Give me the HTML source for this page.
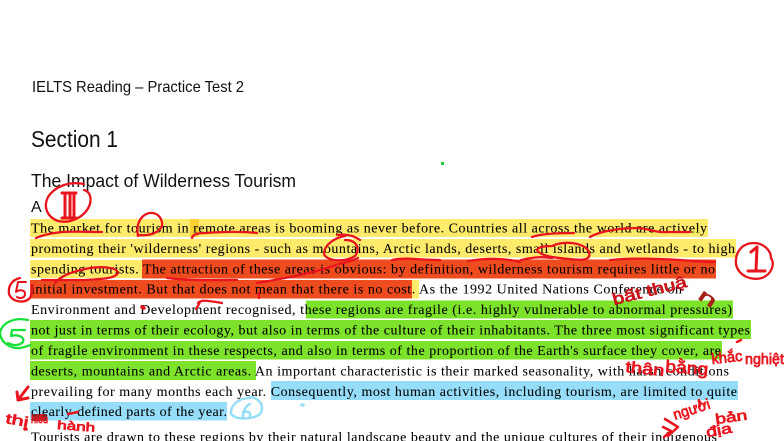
<!DOCTYPE html>
<html><head><meta charset="utf-8">
<style>
html,body{margin:0;padding:0;background:#fff;width:784px;height:441px;overflow:hidden}
svg{display:block;position:absolute;left:0;top:0;filter:blur(.3px)}
.s{font-family:"Liberation Serif",serif;font-size:14px;fill:#000;stroke:#000;stroke-width:.05}
.h{font-family:"Liberation Sans",sans-serif;fill:#111}
.r path{fill:none;stroke:#e8141e;stroke-width:2.3;stroke-linecap:round;stroke-linejoin:round}
.w{font-family:"Liberation Sans",sans-serif;fill:#e8141e;stroke:#e8141e;stroke-width:.7}
</style></head><body>
<svg width="784" height="441" viewBox="0 0 784 441">
<g>
<rect x="30" y="219" width="678" height="18" fill="#ffeb6b"/>
<rect x="190" y="219" width="9" height="18" fill="#fbd233"/>
<rect x="30" y="239" width="706" height="18.500" fill="#ffeb6b"/>
<rect x="30" y="260" width="112" height="18" fill="#ffeb6b"/>
<rect x="142" y="259.500" width="574" height="19" fill="#ee4b1f"/>
<rect x="30" y="280" width="382" height="18.500" fill="#ee4b1f"/>
<rect x="412" y="280" width="7" height="18.500" fill="#ffeb6b"/>
<rect x="306" y="300.500" width="427" height="18" fill="#7ce22b"/>
<rect x="30" y="320" width="721" height="19" fill="#7ce22b"/>
<rect x="30" y="341" width="692" height="18.500" fill="#7ce22b"/>
<rect x="30" y="361" width="226" height="19" fill="#7ce22b"/>
<rect x="271" y="381" width="467" height="19" fill="#95ddf8"/>
<rect x="30" y="402" width="197" height="18.500" fill="#95ddf8"/>
</g>
<text class="h" x="32" y="92" font-size="16" textLength="212" lengthAdjust="spacingAndGlyphs">IELTS Reading – Practice Test 2</text>
<text class="h" x="31" y="147" font-size="23" textLength="87" lengthAdjust="spacingAndGlyphs">Section 1</text>
<text class="h" x="31" y="187" font-size="18" textLength="265" lengthAdjust="spacingAndGlyphs">The Impact of Wilderness Tourism</text>
<text class="h" x="31" y="212" font-size="16">A</text>
<g class="s">
<text x="31" y="232.500" textLength="676">The market for tourism in remote areas is booming as never before. Countries all across the world are actively</text>
<text x="31" y="253" textLength="704">promoting their 'wilderness' regions - such as mountains, Arctic lands, deserts, small islands and wetlands - to high</text>
<text x="31" y="273.500" textLength="684">spending tourists. The attraction of these areas is obvious: by definition, wilderness tourism requires little or no</text>
<text x="31" y="293.500" textLength="651">initial investment. But that does not mean that there is no cost. As the 1992 United Nations Conference on</text>
<text x="31" y="314" textLength="701">Environment and Development recognised, these regions are fragile (i.e. highly vulnerable to abnormal pressures)</text>
<text x="31" y="334.500" textLength="719">not just in terms of their ecology, but also in terms of the culture of their inhabitants. The three most significant types</text>
<text x="31" y="355" textLength="690">of fragile environment in these respects, and also in terms of the proportion of the Earth's surface they cover, are</text>
<text x="31" y="375.500" textLength="698">deserts, mountains and Arctic areas. An important characteristic is their marked seasonality, with harsh conditions</text>
<text x="31" y="396" textLength="706">prevailing for many months each year. Consequently, most human activities, including tourism, are limited to quite</text>
<text x="31" y="416" textLength="196">clearly-defined parts of the year.</text>
<text x="31" y="441.500" textLength="686">Tourists are drawn to these regions by their natural landscape beauty and the unique cultures of their indigenous</text>
</g>
<g class="r">
<path d="M84 184C70 181 55 186 48 197C43 207 47 217 58 221C72 224 86 216 90 204C92 195 88 191 84 190"/>
<path style="stroke-width:3" d="M65 194V218M70 193V218M74 194V217M62 193H76M62 218H76"/>
<path d="M36 238C45 234 54 233 62 232C78 231 90 232 102 232"/>
<path d="M138 236C136 226 139 216 149 213C158 212 163 219 162 226C158 234 148 236 139 235"/>
<path d="M192 238C193 234 198 233 205 233C222 232 240 231 257 233"/>
<path d="M345 236C334 238 324 245 324 254C327 262 346 262 355 256C360 250 358 240 345 240M337 235C345 234 353 235 360 240"/>
<path d="M55 283C60 276 74 271 90 268C104 266 118 268 118 273C115 279 100 279 85 280C70 280 55 280 42 280"/>
<path d="M167 278C190 281 215 280 237 280"/>
<path d="M257 283C280 279 310 274 333 266C345 262 352 261 358 258"/>
<path d="M392 260C405 257 420 260 440 260M468 261C485 258 505 258 520 262M521 260C530 258 540 256 552 258"/>
<path d="M532 237C540 234 555 233 574 233"/>
<path d="M590 237C600 231 620 228 639 228C650 229 656 233 668 232C677 232 686 232 690 232"/>
<path d="M552 246C565 240 585 243 589 252C591 259 586 261 570 259C555 258 540 256 537 250C538 247 545 246 552 246"/>
<path d="M610 260C630 258 650 258 680 260C695 261 708 262 715 262"/>
<path d="M754 243C742 243 735 252 736 264C738 275 750 281 762 278C772 274 775 264 771 258C771 250 763 243 754 243Z"/>
<path style="stroke-width:3" d="M751 252L757 247L756 270M748 271H765"/>
<path d="M20 278C11 280 8 287 9 294C12 302 24 304 30 298C33 292 32 287 32 285"/>
<path style="stroke-width:2" d="M18 282L16 292C20 289 25 290 25 294C25 298 20 299 17 297M18 282H26"/>
<path d="M198 303C200 300 205 300 222 303M196 309C198 306 199 304 200 302"/>
<path d="M259 293V298"/>
<path style="stroke-width:3.500" d="M142 307L144 308"/>
<path d="M28 320C15 317 3 322 0 332C0 342 10 349 20 348C25 347 28 346 30 345" style="stroke:#18e03a"/>
<path d="M25 330H12L11 336C18 334 25 337 23 342C19 346 14 346 8 343" style="stroke:#18e03a"/>
<path d="M250 398C238 398 230 406 231 414C236 420 252 420 260 414C265 407 260 398 250 397" style="stroke:#95ddf8;stroke-width:2.500"/>
<path d="M250 404C245 406 243 412 243 418M243 412C248 411 251 412 250 416" style="stroke:#95ddf8;stroke-width:2.500"/>
<path d="M302 405L303 405" style="stroke:#95ddf8;stroke-width:3.500"/>
<path style="stroke-width:3" d="M28 387L18 400M17 392L18 400L28 398"/>
<path style="stroke-width:2.500" d="M665 419L678 427L668 436M663 427L671 431L664 437"/>
<path style="stroke-width:2.500" d="M68 414L78 412"/>
<path style="stroke-width:3.500" d="M25 429L26 429"/>
<path style="stroke-width:2.500" d="M737 342L741 340M699 400L700 406"/>
</g>
<rect x="32" y="414" width="15" height="7" fill="#8b1a1a" opacity=".9"/>
<rect x="441" y="162" width="3" height="3" fill="#22cc33"/>
<text class="w" x="5" y="423" font-size="14" transform="rotate(10 5 423)" textLength="23" lengthAdjust="spacingAndGlyphs">thị</text>
<text class="w" x="31" y="423" font-size="11" textLength="17" lengthAdjust="spacingAndGlyphs">hiếu</text>
<text class="w" x="57" y="429" font-size="12" transform="rotate(4 57 429)" textLength="38" lengthAdjust="spacingAndGlyphs">hành</text>
<text class="w" x="614" y="305" font-size="16" transform="rotate(-14 614 305)" textLength="76" lengthAdjust="spacingAndGlyphs" style="fill:#c8141a;stroke:#c8141a">bất thuậ</text>
<text class="w" x="697" y="298" font-size="18" transform="rotate(35 697 298)" textLength="18" lengthAdjust="spacingAndGlyphs" style="fill:#a8201a;stroke:#a8201a">n</text>
<text class="w" x="625" y="372" font-size="16" transform="rotate(6 625 372)" textLength="39" lengthAdjust="spacingAndGlyphs">thân</text>
<text class="w" x="665" y="372" font-size="17" transform="rotate(4 665 372)" textLength="43" lengthAdjust="spacingAndGlyphs">bằng</text>
<text class="w" x="712" y="364" font-size="15" transform="rotate(-6 712 364)" textLength="31" lengthAdjust="spacingAndGlyphs">khắc</text>
<text class="w" x="745" y="364" font-size="15" textLength="39" lengthAdjust="spacingAndGlyphs">nghiệt</text>
<text class="w" x="675" y="420" font-size="15" transform="rotate(-18 675 420)" textLength="38" lengthAdjust="spacingAndGlyphs">người</text>
<text class="w" x="716" y="424" font-size="14" transform="rotate(-8 716 424)" textLength="32" lengthAdjust="spacingAndGlyphs">bản</text>
<text class="w" x="707" y="437" font-size="14" transform="rotate(-10 707 437)" textLength="26" lengthAdjust="spacingAndGlyphs">địa</text>
</svg>
</body></html>
